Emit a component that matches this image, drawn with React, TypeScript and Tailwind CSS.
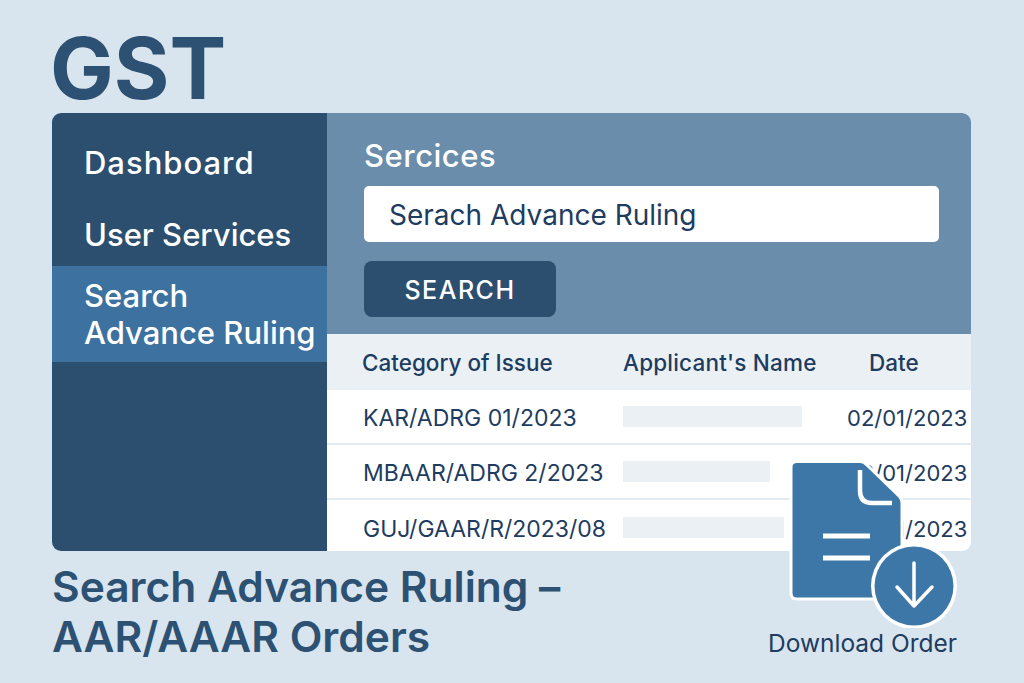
const rows = [
  { id: "KAR/ADRG 01/2023", bar: "w-[179px]", date: "02/01/2023" },
  { id: "MBAAR/ADRG 2/2023", bar: "w-[147px]", date: "02/01/2023" },
  { id: "GUJ/GAAR/R/2023/08", bar: "w-[161px]", date: "02/01/2023" },
];

const DownloadOrder = () => (
  <div className="absolute left-[768px] top-[460px] w-[190px]">
    <svg width="190" height="168" viewBox="0 0 190 168" className="block">
      <path
        d="M29 1.5 H92 Q96 1.5 99 5 L131 36 Q134 39 134 43 V139 H29 Q23 139 23 133 V7 Q23 1.5 29 1.5 Z"
        fill="#3d77a8"
        stroke="#ffffff"
        strokeWidth="3"
      />
      <path d="M92 10 V31 Q92 43 104 43 H124" fill="none" stroke="#ffffff" strokeWidth="4.5" />
      <path d="M55 76 H102 M55 98 H102" fill="none" stroke="#ffffff" strokeWidth="5" />
      <circle cx="146" cy="126" r="43" fill="#ffffff" />
      <circle cx="146" cy="126" r="39.5" fill="#3d77a8" />
      <path
        d="M146 103 V146 M129 127 L146 146 L164 127"
        fill="none"
        stroke="#ffffff"
        strokeWidth="3.5"
        strokeLinecap="round"
        strokeLinejoin="round"
      />
    </svg>
    <div className="whitespace-nowrap text-[24.5px] leading-[30px] text-[#1d3c5f]">
      Download Order
    </div>
  </div>
);

export default function App() {
  return (
    <div className="relative h-[683px] w-[1024px] overflow-hidden bg-[#d8e4ee] pl-[52px] pr-[53px] font-['Inter',sans-serif]">
      <h1 className="-ml-[2px] h-[113px] pt-[24px] text-[85px] leading-[90px] font-bold text-[#2c5172]">GST</h1>

      <div className="flex h-[438px] overflow-hidden rounded-[9px] bg-white">
        <aside className="w-[275px] shrink-0 bg-[#2c4f70] text-[31px] font-medium text-white">
          <div className="h-[153px] pl-[33px] pt-[28px] leading-[44px]">
            <div className="-ml-[1px] tracking-[1px]">Dashboard</div>
            <div className="-ml-[1px] mt-[28px]">User Services</div>
          </div>
          <div className="h-[96px] bg-[#3d719f] pl-[32px] pt-[11px] leading-[37px]">
            Search
            <br />
            Advance Ruling
          </div>
        </aside>

        <main className="min-w-0 flex-1">
          <section className="h-[221px] bg-[#6a8dab] pl-[37px] pr-[32px] pt-[22px]">
            <h2 className="text-[31px] leading-[42px] font-medium tracking-[0.5px] text-white">Sercices</h2>
            <div className="mt-[9px] flex h-[56px] items-center rounded-[5px] bg-white pl-[25px] pt-[2px] text-[28px] text-[#1d3c5f]">
              Serach Advance Ruling
            </div>
            <button className="mt-[19px] h-[56px] w-[192px] rounded-[8px] bg-[#2c4f70] pt-[4px] text-[25px] font-medium tracking-[1.5px] text-white">
              SEARCH
            </button>
          </section>

          <div className="flex h-[56px] items-center bg-[#ebf0f4] pt-[2px] text-[22.5px] font-medium text-[#1d3c5f]">
            <span className="w-[296px] pl-[35px] whitespace-nowrap">Category of Issue</span>
            <span className="w-[246px] whitespace-nowrap tracking-[0.2px]">Applicant's Name</span>
            <span>Date</span>
          </div>

          {rows.map((row) => (
            <div
              key={row.id}
              className="flex h-[55px] items-center border-b-2 border-[#e3ebf2] text-[22px] text-[#1d3c5f] last:border-b-0"
            >
              <span className="w-[296px] pl-[36px] pt-[3px] text-[23px] whitespace-nowrap">{row.id}</span>
              <span className="w-[224px]">
                <span className={`block h-[21px] bg-[#ebf0f4] ${row.bar}`} />
              </span>
              <span className="pt-[3px] whitespace-nowrap">{row.date}</span>
            </div>
          ))}
        </main>
      </div>

      <h2 className="mt-[11px] text-[42.5px] leading-[50px] font-semibold text-[#2c5172]">
        Search Advance Ruling –
        <br />
        AAR/AAAR Orders
      </h2>

      <DownloadOrder />
    </div>
  );
}
